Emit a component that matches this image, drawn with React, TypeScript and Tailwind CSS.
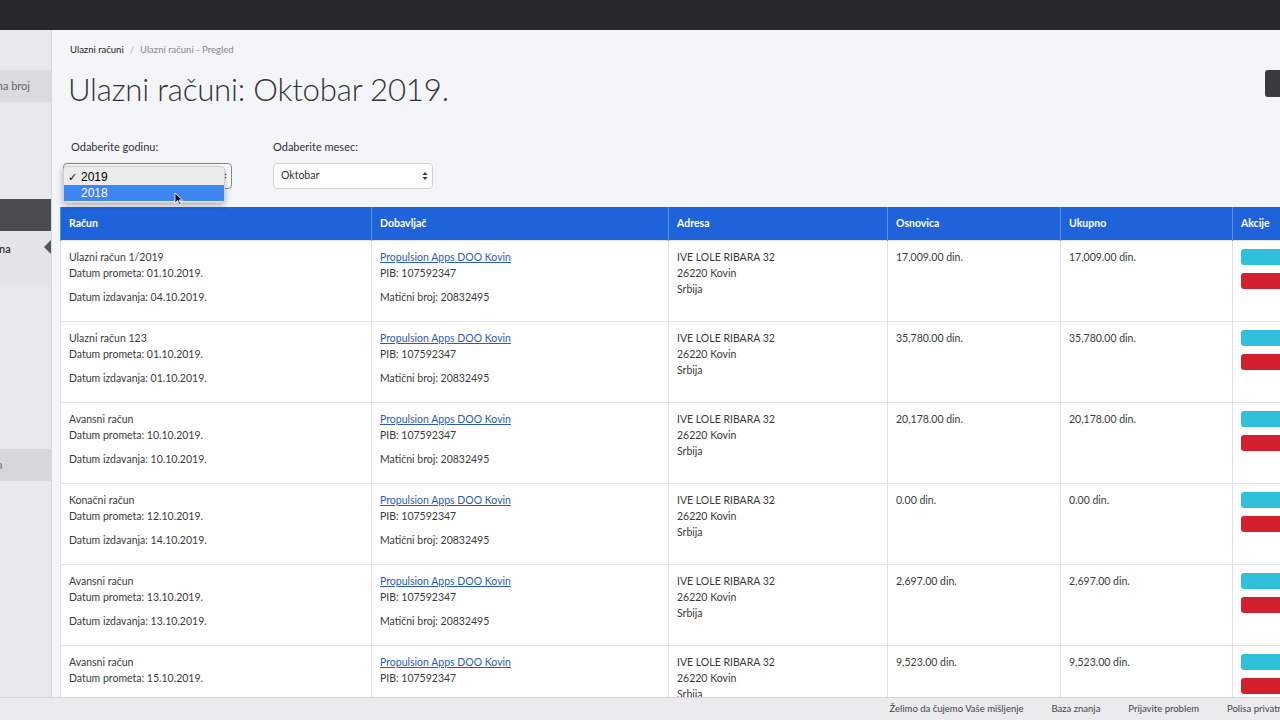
import React from 'react';

const rows = [
    { name: 'Ulazni račun 1/2019', promet: '01.10.2019.', izdavanje: '04.10.2019.', osnovica: '17,009.00 din.', ukupno: '17,009.00 din.' },
    { name: 'Ulazni račun 123', promet: '01.10.2019.', izdavanje: '01.10.2019.', osnovica: '35,780.00 din.', ukupno: '35,780.00 din.' },
    { name: 'Avansni račun', promet: '10.10.2019.', izdavanje: '10.10.2019.', osnovica: '20,178.00 din.', ukupno: '20,178.00 din.' },
    { name: 'Konačni račun', promet: '12.10.2019.', izdavanje: '14.10.2019.', osnovica: '0.00 din.', ukupno: '0.00 din.' },
    { name: 'Avansni račun', promet: '13.10.2019.', izdavanje: '13.10.2019.', osnovica: '2,697.00 din.', ukupno: '2,697.00 din.' },
    { name: 'Avansni račun', promet: '15.10.2019.', izdavanje: '15.10.2019.', osnovica: '9,523.00 din.', ukupno: '9,523.00 din.' },
];

const SelectArrows = () => (
    <svg width="6" height="10" viewBox="0 0 6 10" className="shrink-0">
        <path d="M0.5 4 L3 1 L5.5 4 Z" fill="#333" />
        <path d="M0.5 6 L3 9 L5.5 6 Z" fill="#333" />
    </svg>
);

const Sidebar = () => (
    <div className="w-[52px] shrink-0 bg-[#e8e9ec] border-r border-[#d8d9dc] flex flex-col text-[11px] text-[#666] overflow-hidden">
        <div className="h-[40px]" />
        <div className="h-[32px] bg-[#dadbde] flex items-center justify-end pr-[21px] whitespace-nowrap">na broj</div>
        <div className="h-[97px]" />
        <div className="h-[32px] bg-[#4b4c51]" />
        <div className="h-[56px] bg-[#e4e5e8] flex items-start pt-[10px] whitespace-nowrap relative">
            <span className="font-semibold text-[#333] -ml-[1px]">na</span>
            <span className="absolute right-0 top-[9px] w-0 h-0 border-y-[7px] border-y-transparent border-r-[7px] border-r-[#55565b]" />
        </div>
        <div className="h-[162px]" />
        <div className="h-[32px] bg-[#d6d7da] flex items-center whitespace-nowrap text-[#777]">
            <span className="-ml-[3px]">a</span>
        </div>
    </div>
);

export default function App() {
    return (
        <div className="w-[1280px] h-[720px] overflow-hidden flex flex-col bg-[#f4f5f8]" style={{ fontFamily: 'Lato, "Open Sans", sans-serif' }}>
            <div className="h-[30px] shrink-0 bg-[#27282c]" />
            <div className="flex-1 flex min-h-0">
                <Sidebar />
                <div className="flex-1 min-w-0 overflow-hidden pl-[8px]">
                    <div className="w-[1290px]">
                        <div className="pt-[14px] pl-[10px] text-[9.5px] leading-[12px] flex gap-[6px]">
                            <span className="text-[#222]">Ulazni računi</span>
                            <span className="text-[#aaa]">/</span>
                            <span className="text-[#888]">Ulazni računi - Pregled</span>
                        </div>
                        <div className="flex items-start justify-between mt-[13px]">
                            <h1 className="pl-[8px] text-[31.2px] leading-[40px] font-light text-[#333] tracking-[-0.2px]">Ulazni računi: Oktobar 2019.</h1>
                            <div className="mt-[1px] w-[85px] h-[27px] bg-[#3a3b40] rounded-l-[3px]" />
                        </div>
                        <div className="flex gap-[41px] mt-[31px] pl-[3px]">
                            <div className="w-[169px]">
                                <div className="pl-[8px] text-[11px] leading-[14px] text-[#333]">Odaberite godinu:</div>
                                <div className="relative mt-[9px]">
                                    <div className="h-[26px] bg-white border border-[#888] rounded-[4px] flex items-center justify-end pr-[4px]">
                                        <SelectArrows />
                                    </div>
                                    <div className="absolute left-0 top-[3px] w-[162px] bg-[#ececec] rounded-[4px] shadow-[0_2px_6px_rgba(0,0,0,0.3)] border border-[#d0d0d0] py-[1px] text-[12px] leading-[16px] text-black" style={{ fontFamily: '"Liberation Sans", Arial, sans-serif' }}>
                                        <div className="h-[17px] flex items-center pl-[4px]">
                                            <span className="w-[13px] text-[11px]">✓</span>
                                            <span>2019</span>
                                        </div>
                                        <div className="h-[16px] flex items-center pl-[17px] bg-[#3f86f3] text-white">2018</div>
                                    </div>
                                    <svg className="absolute left-[111px] top-[29px]" width="10" height="14" viewBox="0 0 10 14">
                                        <path d="M1 1 L1 11 L3.5 8.5 L5.5 13 L7 12.3 L5 8 L8.5 8 Z" fill="#111" stroke="#fff" strokeWidth="0.8" />
                                    </svg>
                                </div>
                            </div>
                            <div className="w-[160px]">
                                <div className="text-[11px] leading-[14px] text-[#333]">Odaberite mesec:</div>
                                <div className="mt-[9px] h-[26px] bg-white border border-[#d3d3d3] rounded-[4px] flex items-center justify-between pl-[7px] pr-[4px] text-[10.5px] text-[#333]">
                                    <span>Oktobar</span>
                                    <SelectArrows />
                                </div>
                            </div>
                        </div>
                        <table className="mt-[18px] table-fixed border-collapse text-[10.5px] leading-[16px] text-[#3a3a3a]">
                            <colgroup>
                                <col className="w-[311px]" />
                                <col className="w-[297px]" />
                                <col className="w-[219px]" />
                                <col className="w-[173px]" />
                                <col className="w-[172px]" />
                                <col className="w-[80px]" />
                            </colgroup>
                            <thead>
                                <tr className="h-[33px] bg-[#1f63da] text-white text-left">
                                    {['Račun', 'Dobavljač', 'Adresa', 'Osnovica', 'Ukupno', 'Akcije'].map((h) => (
                                        <th key={h} className="px-[8px] font-bold border-x border-[#5b8ee6]">{h}</th>
                                    ))}
                                </tr>
                            </thead>
                            <tbody>
                                {rows.map((r, i) => (
                                    <tr key={i} className="h-[81px] bg-white align-top">
                                        <td className="border border-[#e0e2e6] px-[8px] pt-[8px]">
                                            <div>{r.name}</div>
                                            <div>Datum prometa: {r.promet}</div>
                                            <div className="mt-[8px]">Datum izdavanja: {r.izdavanje}</div>
                                        </td>
                                        <td className="border border-[#e0e2e6] px-[8px] pt-[8px]">
                                            <div className="text-[#2d5bb3] underline">Propulsion Apps DOO Kovin</div>
                                            <div>PIB: 107592347</div>
                                            <div className="mt-[8px]">Matični broj: 20832495</div>
                                        </td>
                                        <td className="border border-[#e0e2e6] px-[8px] pt-[8px]">
                                            <div>IVE LOLE RIBARA 32</div>
                                            <div>26220 Kovin</div>
                                            <div>Srbija</div>
                                        </td>
                                        <td className="border border-[#e0e2e6] px-[8px] pt-[8px]">{r.osnovica}</td>
                                        <td className="border border-[#e0e2e6] px-[8px] pt-[8px]">{r.ukupno}</td>
                                        <td className="border border-[#e0e2e6] pl-[8px] pt-[8px]">
                                            <div className="w-[60px] h-[16px] bg-[#31c0db] rounded-[3px]" />
                                            <div className="w-[60px] h-[16px] bg-[#d3202f] rounded-[3px] mt-[8px]" />
                                        </td>
                                    </tr>
                                ))}
                            </tbody>
                        </table>
                    </div>
                </div>
            </div>
            <div className="h-[23px] shrink-0 bg-[#ebebed] border-t border-[#d6d6d8] flex items-center justify-end gap-[28px] text-[9.5px] text-[#444] whitespace-nowrap overflow-hidden">
                <span>Želimo da čujemo Vaše mišljenje</span>
                <span>Baza znanja</span>
                <span>Prijavite problem</span>
                <span className="w-[53px] overflow-hidden">Polisa privatnosti</span>
            </div>
        </div>
    );
}
